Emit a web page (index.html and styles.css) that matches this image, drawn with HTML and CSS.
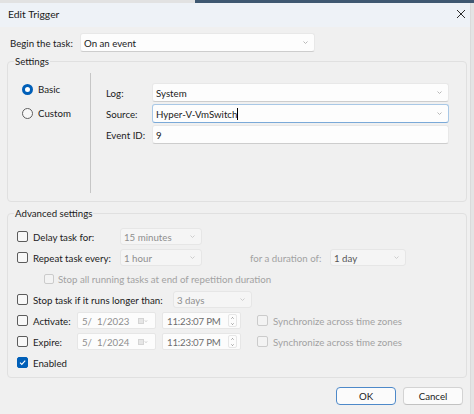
FILE: index.html
```html
<!DOCTYPE html>
<html>
	<head>
		<meta charset="UTF-8">
		<title>Edit Trigger</title>
		<link rel="stylesheet" href="styles.css">
	</head>
	<body>
		<div class="backdrop"><span class="bd-left"></span><span class="bd-right"></span></div>
		<div class="dialog">
			<div class="titlebar">
				<span class="title">Edit Trigger</span>
				<svg class="close" width="10" height="10" viewBox="0 0 10 10"><path d="M1 1L9 9M9 1L1 9" stroke="#2b2b2b" stroke-width="1"/></svg>
			</div>
			<div class="content">
				<div class="begin">
					<label>Begin the task:</label>
					<div class="combo task">
						<span>On an event</span>
						<svg class="chev" width="5" height="3" viewBox="0 0 5 3"><path d="M0.5 0.5L2.5 2.5L4.5 0.5" fill="none" stroke="#b8b8b8"/></svg>
					</div>
				</div>

				<fieldset class="group settings">
					<legend>Settings</legend>
					<div class="settings-body">
						<div class="kinds">
							<div class="radio on"><i></i>Basic</div>
							<div class="radio"><i></i>Custom</div>
						</div>
						<div class="fields">
							<div class="field">
								<label>Log:</label>
								<div class="combo">
									<span>System</span>
									<svg class="chev" width="5" height="3" viewBox="0 0 5 3"><path d="M0.5 0.5L2.5 2.5L4.5 0.5" fill="none" stroke="#b8b8b8"/></svg>
								</div>
							</div>
							<div class="field">
								<label>Source:</label>
								<div class="combo focus">
									<span>Hyper-V-VmSwitch<b class="caret"></b></span>
									<svg class="chev" width="5" height="3" viewBox="0 0 5 3"><path d="M0.5 0.5L2.5 2.5L4.5 0.5" fill="none" stroke="#b8b8b8"/></svg>
								</div>
							</div>
							<div class="field">
								<label>Event ID:</label>
								<div class="combo">
									<span>9</span>
								</div>
							</div>
						</div>
					</div>
				</fieldset>

				<fieldset class="group advanced">
					<legend>Advanced settings</legend>
					<div class="adv-body">
						<div class="row">
							<span class="check"></span>
							<label class="w-delay">Delay task for:</label>
							<div class="sel w82">
								<span>15 minutes</span>
								<svg class="chev" width="5" height="3" viewBox="0 0 5 3"><path d="M0.5 0.5L2.5 2.5L4.5 0.5" fill="none" stroke="#cdcdcd"/></svg>
							</div>
						</div>
						<div class="row">
							<span class="check"></span>
							<label class="w-delay">Repeat task every:</label>
							<div class="sel w82">
								<span>1 hour</span>
								<svg class="chev" width="5" height="3" viewBox="0 0 5 3"><path d="M0.5 0.5L2.5 2.5L4.5 0.5" fill="none" stroke="#cdcdcd"/></svg>
							</div>
							<label class="muted w-duration">for a duration of:</label>
							<div class="sel w76">
								<span class="dark">1 day</span>
								<svg class="chev" width="5" height="3" viewBox="0 0 5 3"><path d="M0.5 0.5L2.5 2.5L4.5 0.5" fill="none" stroke="#cdcdcd"/></svg>
							</div>
						</div>
						<div class="row sub">
							<span class="check small off"></span>
							<label class="muted">Stop all running tasks at end of repetition duration</label>
						</div>
						<div class="row">
							<span class="check"></span>
							<label class="w-stop">Stop task if it runs longer than:</label>
							<div class="sel w79">
								<span>3 days</span>
								<svg class="chev" width="5" height="3" viewBox="0 0 5 3"><path d="M0.5 0.5L2.5 2.5L4.5 0.5" fill="none" stroke="#cdcdcd"/></svg>
							</div>
						</div>
						<div class="row">
							<span class="check"></span>
							<label class="w-date">Activate:</label>
							<div class="date">
								<span>5/  1/2023</span>
								<svg width="10" height="6" viewBox="0 0 10 6"><rect x="0.5" y="0.5" width="5" height="5" fill="#e6e6e6" stroke="#d4d4d4"/><path d="M7 2.5L8 3.5L9 2.5" stroke="#c0c0c0" fill="none"/></svg>
							</div>
							<div class="date time">
								<span>11:23:07 PM</span>
								<span class="spin"><svg width="7" height="12" viewBox="0 0 7 12"><path d="M2.5 3.5L3.5 2.5L4.5 3.5M2.5 8.5L3.5 9.5L4.5 8.5" stroke="#8a8a8a" fill="none"/></svg></span>
							</div>
							<span class="check off sync"></span>
							<label class="muted">Synchronize across time zones</label>
						</div>
						<div class="row">
							<span class="check"></span>
							<label class="w-date">Expire:</label>
							<div class="date">
								<span>5/  1/2024</span>
								<svg width="10" height="6" viewBox="0 0 10 6"><rect x="0.5" y="0.5" width="5" height="5" fill="#e6e6e6" stroke="#d4d4d4"/><path d="M7 2.5L8 3.5L9 2.5" stroke="#c0c0c0" fill="none"/></svg>
							</div>
							<div class="date time">
								<span>11:23:07 PM</span>
								<span class="spin"><svg width="7" height="12" viewBox="0 0 7 12"><path d="M2.5 3.5L3.5 2.5L4.5 3.5M2.5 8.5L3.5 9.5L4.5 8.5" stroke="#8a8a8a" fill="none"/></svg></span>
							</div>
							<span class="check off sync"></span>
							<label class="muted">Synchronize across time zones</label>
						</div>
						<div class="row">
							<span class="check on"><svg width="9" height="9" viewBox="0 0 9 9"><path d="M2 4.6L3.8 6.4L7.2 2.6" fill="none" stroke="#fff" stroke-width="1.1"/></svg></span>
							<label>Enabled</label>
						</div>
					</div>
				</fieldset>

				<div class="buttons">
					<button class="btn primary">OK</button>
					<button class="btn">Cancel</button>
				</div>
			</div>
		</div>
	</body>
</html>
```

FILE: styles.css
```css
*{
	margin: 0;
	padding: 0;
	box-sizing: border-box;
}
body{
	width: 474px;
	height: 414px;
	overflow: hidden;
	background: #e4e4e4;
	font-family: Lato, "Noto Sans", sans-serif;
	font-size: 9.7px;
	color: #1b1b1b;
}
.backdrop{
	display: flex;
	height: 3px;
}
.backdrop .bd-left{
	width: 195px;
	background: #e2e2e2;
}
.backdrop .bd-right{
	flex: 1;
	background: #3f5871;
}
.dialog{
	width: 471px;
	height: 411px;
	background: #f0f0f0;
	border-right: 1px solid #dadada;
}
.titlebar{
	height: 24px;
	background: #eef2f7;
	display: flex;
	justify-content: space-between;
	align-items: center;
	padding: 0 4px 2px 8px;
	font-size: 10.4px;
}
.content{
	padding: 6px 0 0 7px;
}
.begin{
	display: flex;
	align-items: center;
	height: 19px;
	padding-left: 3px;
}
.begin label{
	width: 70px;
}

/* combo boxes and text boxes */
.combo{
	height: 19px;
	background: #fdfdfd;
	border: 1px solid #e8e8e8;
	border-bottom-color: #cdcdcd;
	border-radius: 3px;
	display: flex;
	align-items: center;
	justify-content: space-between;
	padding: 0 6px 0 3px;
}
.combo.task{
	width: 235px;
}
.combo.focus{
	border-color: #a9c8e6;
	border-bottom-color: #7aa9d8;
}
.caret{
	display: inline-block;
	width: 1px;
	height: 12px;
	background: #000;
	vertical-align: -2px;
}

/* group boxes */
.group{
	width: 460px;
	border: 1px solid #e0e0e0;
	border-radius: 4px;
	min-width: 0;
}
.group legend{
	margin-left: 6px;
	padding: 0 1px;
	line-height: 13px;
}
.settings{
	margin-top: 3px;
	padding: 5px 0 8px 0;
}
.advanced{
	margin-top: 5px;
	padding: 0;
}

.settings-body{
	display: flex;
	height: 120px;
}
.kinds{
	width: 83px;
	border-right: 1px solid #c6c6c6;
	padding: 9px 0 0 14px;
	display: flex;
	flex-direction: column;
	gap: 10px;
}
.radio{
	display: flex;
	align-items: center;
	height: 14px;
}
.radio i{
	width: 11px;
	height: 11px;
	border-radius: 50%;
	border: 1px solid #5f5f5f;
	background: #f8f8f8;
	margin-right: 5px;
}
.radio.on i{
	border: 3px solid #005fb8;
	background: #fff;
}
.fields{
	padding: 10px 0 0 15px;
	display: flex;
	flex-direction: column;
	gap: 2px;
}
.field{
	display: flex;
	align-items: center;
	height: 19px;
}
.field label{
	width: 46px;
}
.field .combo{
	width: 297px;
}

/* advanced rows */
.adv-body{
	padding: 6px 0 4px 9px;
}
.row{
	display: flex;
	align-items: center;
	height: 21px;
	white-space: nowrap;
}
.check{
	flex: none;
	width: 11px;
	height: 11px;
	border: 1px solid #5c5c5c;
	border-radius: 2px;
	background: #f8f8f8;
	margin-right: 5px;
	display: flex;
	align-items: center;
	justify-content: center;
}
.check.on{
	background: #005fb8;
	border-color: #005fb8;
}
.check.off{
	border-color: #cbcbcb;
	background: #f3f3f3;
}
.check.small{
	width: 10px;
	height: 10px;
	margin-left: 27px;
	margin-right: 4px;
}
.check.sync{
	margin-left: 16px;
	margin-right: 5px;
}
.muted{
	color: #a2a2a2;
}
.w-delay{
	width: 87px;
}
.w-stop{
	width: 140px;
}
.w-date{
	width: 44px;
}
.w-duration{
	width: 80px;
	margin-left: 48px;
}

.sel{
	height: 17px;
	background: #f5f5f5;
	border: 1px solid #e6e6e6;
	border-radius: 3px;
	display: flex;
	align-items: center;
	justify-content: space-between;
	padding: 0 6px 0 3px;
	color: #8e8e8e;
}
.sel .dark{
	color: #555;
}
.w82{
	width: 82px;
}
.w79{
	width: 79px;
}
.w76{
	width: 76px;
}

.date{
	width: 79px;
	height: 17px;
	background: #fcfcfc;
	border: 1px solid #e6e6e6;
	border-radius: 2px;
	display: flex;
	align-items: center;
	justify-content: space-between;
	padding: 0 7px 0 4px;
	color: #8e8e8e;
	white-space: pre;
}
.date.time{
	margin-left: 6px;
	padding: 0 3px 0 4px;
	color: #6e6e6e;
	letter-spacing: -0.2px;
}
.spin{
	width: 9px;
	height: 13px;
	border: 1px solid #e6e6e6;
	border-radius: 2px;
	display: flex;
	align-items: center;
	justify-content: center;
}

/* buttons */
.buttons{
	display: flex;
	justify-content: flex-end;
	gap: 7px;
	margin-top: 9px;
	padding-right: 7px;
}
.btn{
	width: 60px;
	height: 18px;
	background: #fbfbfb;
	border: 1px solid #d3d3d3;
	border-bottom-color: #c2c2c2;
	border-radius: 4px;
	font-family: inherit;
	font-size: 9.7px;
	color: #1b1b1b;
}
.btn.primary{
	border-color: #4d89c9;
}
```
